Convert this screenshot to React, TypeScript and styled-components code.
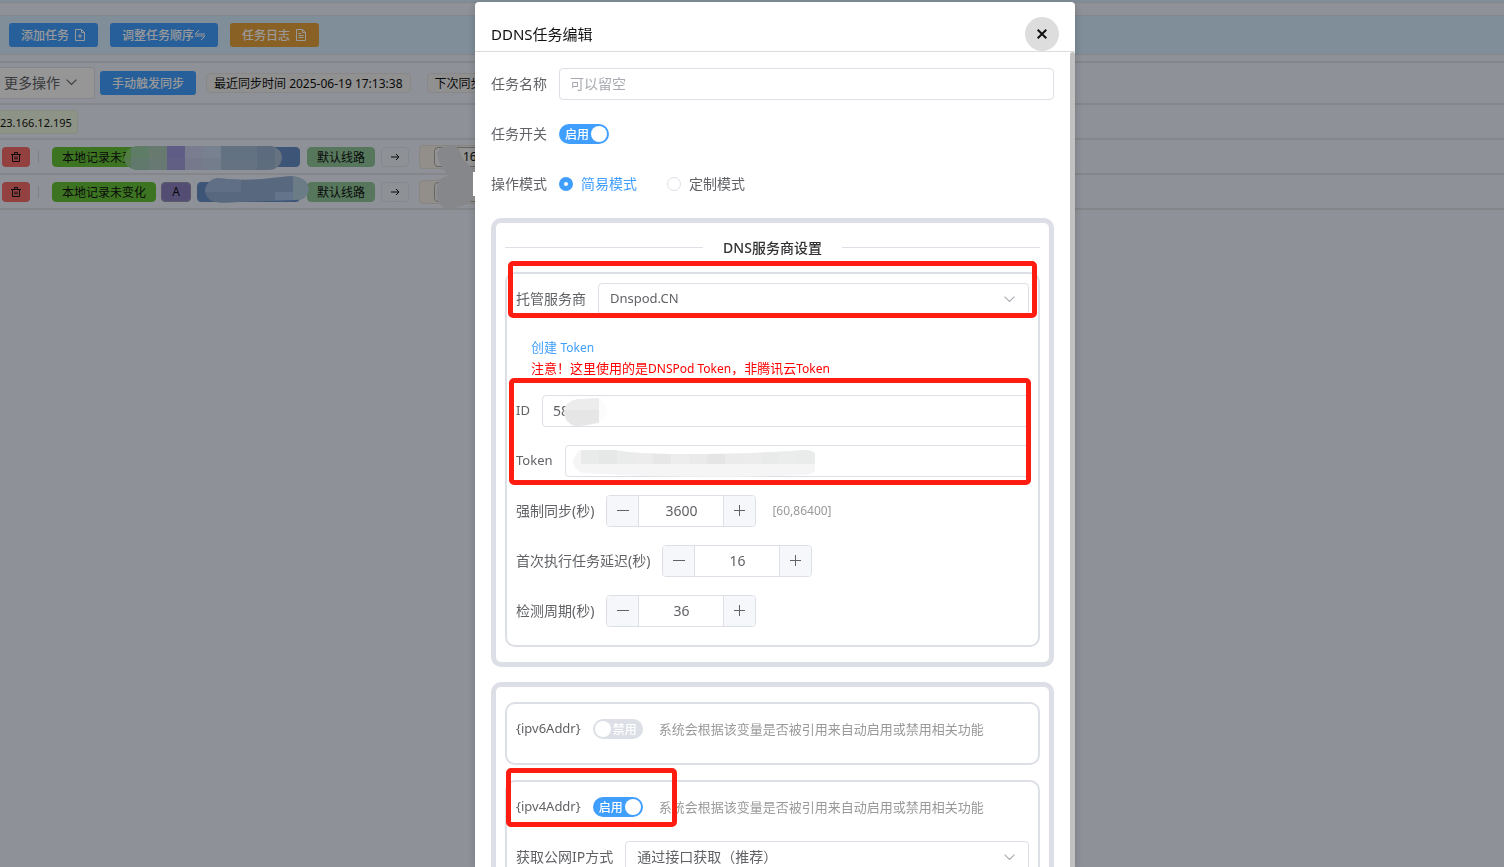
import React from "react";
import styled, { createGlobalStyle, css } from "styled-components";

const GlobalStyle = createGlobalStyle`
  *, *::before, *::after { box-sizing: border-box; }
  html, body { margin: 0; padding: 0; }
  body {
    background: #edf3fe;
    color: #111;
    font-size: 14px;
    overflow: hidden;
  }
  body, button, input, select {
    font-family: "Noto Sans", "Noto Sans CJK SC", sans-serif;
  }
  button, input, select { margin: 0; }
`;

/* ---------- page behind the dialog ---------- */

const Page = styled.main`
  min-height: 100vh;
  overflow: hidden;
  white-space: nowrap;
`;

const TopStrip = styled.div`
  height: 3px;
  background: #d5edff;
  border-bottom: 1px solid #dddfe4;
`;

const Toolbar = styled.div`
  display: flex;
  align-items: center;
  gap: 12px;
  height: 40px;
  margin: 12px 0 6px;
  padding: 0 9px;
  background: #d5edff;
  border-top: 1px solid #dddfe4;
  border-bottom: 1px solid #dddfe4;
`;

const Row = styled.div<{ $tall?: boolean }>`
  display: flex;
  align-items: center;
  height: ${(p) => (p.$tall ? 42 : 35)}px;
  border-top: 2px solid #dddfe4;
`;

const ListEnd = styled.div`
  border-top: 2px solid #dddfe4;
`;

const ActionButton = styled.button<{ $tone: "primary" | "warning"; $tight?: boolean }>`
  display: inline-flex;
  align-items: center;
  justify-content: center;
  gap: ${(p) => (p.$tight ? 0 : 5)}px;
  height: 24px;
  padding: 0 12px;
  border: 0;
  border-radius: 3px;
  color: #fff;
  font-size: 12px;
  font-weight: 500;
  background: ${(p) => (p.$tone === "primary" ? "#409eff" : "#e6a23c")};
`;

const MoreButton = styled.button`
  display: flex;
  align-items: center;
  gap: 6px;
  width: 95px;
  height: 32px;
  margin-right: 5px;
  padding: 0 0 2px 4px;
  border: 1px solid #dcdfe6;
  border-left: 0;
  border-radius: 0 4px 4px 0;
  background: #fafafa;
  color: #606266;
  font-size: 14px;
`;

const tagTones = {
  plain: css`background: #f0f0f0; border-color: #e4e3e3;`,
  lime: css`background: #edf5e2; border-color: #e1ead8;`,
  green: css`background: #67c23a; border-color: #67c23a;`,
  sage: css`background: #8fc79a; border-color: #8fc79a;`,
  purple: css`background: #8a80c0; border-color: #9a97ac;`,
  steel: css`background: #6690c8; border-color: #6690c8;`,
  frame: css`background: #edf3fb; border-color: #d9e6f2;`,
  cream: css`background: #f4efe8; border-color: #e4ded6;`,
  white: css`background: #f6f6f6; border-color: #a8a8a8;`,
};

const Tag = styled.span<{ $tone: keyof typeof tagTones; $width?: number; $gap?: number }>`
  display: inline-flex;
  align-items: center;
  justify-content: center;
  flex: none;
  height: 20px;
  width: ${(p) => (p.$width ? `${p.$width}px` : "auto")};
  margin-left: ${(p) => p.$gap ?? 0}px;
  padding: 0 7px;
  border: 1px solid;
  border-radius: 4px;
  font-size: 12px;
  ${(p) => tagTones[p.$tone]}
`;

const AddressTag = styled(Tag)`
  width: 78px;
  height: 24px;
  padding: 2px 0 0;
  border-left: 0;
  border-radius: 0 4px 4px 0;
  justify-content: flex-start;
  font-size: 11px;
`;

const TargetTag = styled(Tag)`
  height: 24px;
  padding: 0 0 0 14px;
  justify-content: flex-start;
`;

const TargetValue = styled(Tag)`
  padding: 0 0 0 28px;
  justify-content: flex-start;
`;

const DeleteButton = styled.button`
  display: grid;
  place-items: center;
  width: 28px;
  height: 20px;
  margin-left: 2px;
  padding: 0;
  border: 0;
  border-radius: 4px;
  background: #f56c6c;
`;

const Divider = styled.span`
  width: 1px;
  height: 12px;
  margin: 0 13px 0 8px;
  background: #d4d6dc;
`;

const Smudge = styled.svg`
  position: absolute;
  left: 0;
  top: 140px;
`;

/* ---------- dialog ---------- */

const Overlay = styled.div`
  position: fixed;
  inset: 0;
  display: flex;
  justify-content: center;
  padding: 2px 0 0 46px;
  background: rgba(0, 0, 0, 0.4);
`;

const Dialog = styled.section`
  display: flex;
  flex-direction: column;
  width: 600px;
  max-width: 100%;
  border-radius: 4px 4px 0 0;
  background: #fff;
  box-shadow: 0 2px 8px rgba(0, 0, 0, 0.2);
`;

const DialogHeader = styled.header`
  display: flex;
  flex: none;
  align-items: center;
  justify-content: space-between;
  height: 50px;
  padding: 14px 16px 0;
  border-bottom: 1px solid #dcdcdc;
`;

const DialogTitle = styled.h1`
  margin: 0;
  font-size: 15px;
  font-weight: 400;
  color: #111;
`;

const CloseButton = styled.button`
  display: grid;
  place-items: center;
  width: 34px;
  height: 34px;
  padding: 0;
  border: 0;
  border-radius: 50%;
  background: #ddd;
`;

const DialogMain = styled.div`
  display: flex;
  flex: 1;
  min-height: 0;
`;

const DialogBody = styled.form`
  flex: 1;
  min-width: 0;
  overflow: hidden;
  padding: 16px;
`;

const ScrollThumb = styled.div`
  width: 5px;
  border-radius: 3px 3px 0 0;
  background: #c1c1c1;
`;

const FormItem = styled.div`
  position: relative;
  display: flex;
  align-items: center;
  height: 32px;
  margin-bottom: 18px;
`;

const Label = styled.label<{ $latin?: boolean }>`
  flex: none;
  padding: 0 12px 2px 0;
  color: #606266;
  font-size: ${(p) => (p.$latin ? 13 : 14)}px;
  white-space: nowrap;
`;

const Hint = styled.span<{ $latin?: boolean }>`
  margin-left: 16px;
  padding-bottom: 2px;
  color: #999;
  font-size: ${(p) => (p.$latin ? 12 : 13)}px;
  white-space: nowrap;
`;

const fieldBox = css`
  width: 100%;
  height: 32px;
  padding: 0 10px 2px;
  border: 1px solid #dcdfe6;
  border-radius: 4px;
  outline: 0;
  background: #fff;
  color: #606266;
  font-size: 14px;
`;

const TextInput = styled.input`
  ${fieldBox}
  flex: 1;
  min-width: 0;
  width: auto;
  &::placeholder { color: #a8abb2; opacity: 1; }
`;

const SelectWrap = styled.div`
  position: relative;
  flex: 1;
  min-width: 0;
  svg {
    position: absolute;
    right: 14px;
    top: 13px;
    pointer-events: none;
  }
`;

const Select = styled.select<{ $latin?: boolean }>`
  ${fieldBox}
  padding-left: 11px;
  appearance: none;
  font-size: ${(p) => (p.$latin ? 13 : 14)}px;
`;

const SwitchLabel = styled.label<{ $on: boolean }>`
  position: relative;
  display: flex;
  flex: none;
  flex-direction: ${(p) => (p.$on ? "row" : "row-reverse")};
  align-items: center;
  justify-content: space-between;
  width: 50px;
  height: 20px;
  padding: ${(p) => (p.$on ? "0 2px 0 6px" : "0 6px 0 2px")};
  border-radius: 10px;
  background: ${(p) => (p.$on ? "#409eff" : "#dcdfe6")};
  color: #fff;
  font-size: 12px;
  font-weight: 500;
  line-height: 18px;
  span { padding-top: 2px; }
  input {
    position: absolute;
    inset: 0;
    opacity: 0;
  }
  i {
    width: 16px;
    height: 16px;
    border-radius: 50%;
    background: #fff;
  }
`;

const RadioLabel = styled.label<{ $checked?: boolean }>`
  display: flex;
  align-items: center;
  gap: 8px;
  margin-right: 30px;
  color: ${(p) => (p.$checked ? "#409eff" : "#606266")};
  font-size: 14px;
  span { padding-bottom: 2px; }
  input {
    appearance: none;
    width: 14px;
    height: 14px;
    border: ${(p) => (p.$checked ? "5px solid #409eff" : "1px solid #dcdfe6")};
    border-radius: 50%;
    background: #fff;
  }
`;

const Group = styled.section`
  margin-bottom: 15px;
  padding: 0 9px 15px;
  border: 5px solid #dcdfe6;
  border-radius: 10px;
`;

const GroupTitle = styled.h2`
  display: flex;
  align-items: center;
  gap: 20px;
  height: 49px;
  margin: 0;
  color: #303133;
  font-size: 14px;
  font-weight: 500;
  span { padding-bottom: 2px; }
  &::before, &::after {
    content: "";
    flex: 1;
    height: 1px;
    background: #dcdfe6;
  }
`;

const Panel = styled.div<{ $spaced?: boolean }>`
  position: relative;
  margin-top: ${(p) => (p.$spaced ? 15 : 0)}px;
  padding: 9px 9px 0;
  border: 2px solid #dcdfe6;
  border-radius: 10px;
`;

const Notes = styled.div`
  display: flex;
  flex-direction: column;
  align-items: flex-start;
  margin: 22px 0 16px;
  padding-left: 15px;
  font-size: 13px;
  line-height: 21px;
  white-space: nowrap;
`;

const Latin = styled.span`
  font-size: 12px;
`;

const TokenLink = styled.a`
  color: #409eff;
  text-decoration: none;
`;

const Warning = styled.span`
  color: #f00;
`;

const NumberBox = styled.div`
  display: flex;
  flex: none;
  width: 150px;
  height: 32px;
  overflow: hidden;
  border: 1px solid #dcdfe6;
  border-radius: 4px;
  input {
    flex: 1;
    min-width: 0;
    padding: 0 0 2px;
    border: 0;
    outline: 0;
    color: #606266;
    font-size: 14px;
    text-align: center;
  }
`;

const StepButton = styled.button<{ $side: "left" | "right" }>`
  display: grid;
  place-items: center;
  width: 32px;
  padding: 0;
  border: 0 solid #dcdfe6;
  border-width: ${(p) => (p.$side === "left" ? "0 1px 0 0" : "0 0 0 1px")};
  background: #f5f7fa;
`;

const Highlight = styled.div<{ $top: number; $left: number; $height: number; $right?: number; $width?: number }>`
  position: absolute;
  z-index: 2;
  top: ${(p) => p.$top}px;
  left: ${(p) => p.$left}px;
  height: ${(p) => p.$height}px;
  ${(p) => (p.$width ? `width: ${p.$width}px;` : `right: ${p.$right}px;`)}
  border: 5px solid #ff1d12;
  border-radius: 5px;
  pointer-events: none;
`;

const Mosaic = styled.svg<{ $left: number }>`
  position: absolute;
  left: ${(p) => p.$left}px;
  top: 2px;
  pointer-events: none;
`;

/* ---------- icons ---------- */

const Chevron = ({ size, color }: { size: number; color: string }) => (
  <svg width={size} height={size * 0.6} viewBox="0 0 10 6" fill="none" stroke={color}>
    <path d="M.5.5 5 5 9.5.5" />
  </svg>
);

const DocIcon = ({ add }: { add?: boolean }) => (
  <svg width="12" height="12" viewBox="0 0 12 12" fill="none" stroke="#fff">
    <path d="M1.5.5h6l3 3v8h-9zM7.5.5v3h3" />
    {add ? <path d="M6 4.8v4.4M3.8 7h4.4" /> : <path d="M3.5 4.5H6M3.5 6.5h5M3.5 8.5h5" />}
  </svg>
);

const SwapIcon = () => (
  <svg width="12" height="12" viewBox="0 0 12 12" fill="none" stroke="#fff" strokeLinejoin="round">
    <path d="M5 1 1 5h10M7 11l4-4H1" />
  </svg>
);

const TrashIcon = () => (
  <svg width="10" height="10" viewBox="0 0 10 10" fill="none" stroke="#111">
    <path d="M0 2.5h10M3.5 2V.5h3V2M1.5 2.5v7h7v-7M4 4.5v3M6 4.5v3" />
  </svg>
);

const ArrowIcon = () => (
  <svg width="9" height="8" viewBox="0 0 9 8" fill="none" stroke="#111">
    <path d="M0 4h8M5 1l3 3-3 3" />
  </svg>
);

/* ---------- form parts ---------- */

const Switch = ({ id, on, text }: { id: string; on: boolean; text: string }) => (
  <SwitchLabel $on={on}>
    <input id={id} type="checkbox" role="switch" defaultChecked={on} />
    <span>{text}</span>
    <i />
  </SwitchLabel>
);

const SelectField = ({ id, value, latin }: { id: string; value: string; latin?: boolean }) => (
  <SelectWrap>
    <Select id={id} defaultValue={value} $latin={latin}>
      <option>{value}</option>
    </Select>
    <Chevron size={11} color="#a8abb2" />
  </SelectWrap>
);

const NumberField = ({ id, label, value, hint }: { id: string; label: string; value: string; hint?: string }) => (
  <FormItem>
    <Label htmlFor={id}>{label}</Label>
    <NumberBox>
      <StepButton type="button" $side="left" aria-label="减少">
        <svg width="12" height="12" stroke="#606266"><path d="M0 5.5h12" /></svg>
      </StepButton>
      <input id={id} defaultValue={value} inputMode="numeric" />
      <StepButton type="button" $side="right" aria-label="增加">
        <svg width="12" height="12" stroke="#606266"><path d="M0 5.5h11M5.5 0v11" /></svg>
      </StepButton>
    </NumberBox>
    {hint && <Hint $latin>{hint}</Hint>}
  </FormItem>
);

const VariableItem = ({ id, name, on, text }: { id: string; name: string; on: boolean; text: string }) => (
  <FormItem>
    <Label htmlFor={id} $latin>{name}</Label>
    <Switch id={id} on={on} text={text} />
    <Hint>系统会根据该变量是否被引用来自动启用或禁用相关功能</Hint>
  </FormItem>
);

const RecordRow = ({ target }: { target: string }) => (
  <Row>
    <DeleteButton type="button" aria-label="删除"><TrashIcon /></DeleteButton>
    <Divider />
    <Tag $tone="green" $width={104}>本地记录未变化</Tag>
    <Tag $tone="purple" $width={30} $gap={5}>A</Tag>
    <Tag $tone="steel" $width={103} $gap={6} />
    <Tag $tone="sage" $width={68} $gap={7}>默认线路</Tag>
    <Tag $tone="frame" $width={28} $gap={6}><ArrowIcon /></Tag>
    <TargetTag $tone="cream" $width={140} $gap={10}>
      <TargetValue $tone="white" $width={110}>{target}</TargetValue>
    </TargetTag>
  </Row>
);

const blues = ["#5f7c67", "#687a70", "#5f5c86", "#7a7c90", "#77818f", "#637283", "#637283", "#5c6c7e", "#66727f"];
const greys = ["#e9eaea", "#e6e7e7", "#eaebeb", "#ececec", "#e7e7e7", "#ededed", "#eaeaea", "#e5e5e5", "#ebebeb", "#ececec", "#e9eaea", "#ebecec", "#e9ecea"];

const PageSmudges = () => (
  <Smudge width="475" height="72" viewBox="0 140 475 72" aria-hidden="true">
    <defs>
      <clipPath id="s1"><path d="M137 146H272Q282 149 282 158Q280 170 268 170H136Q124 167 124 158Q126 147 137 146z" /></clipPath>
      <clipPath id="s2"><path d="M217 178Q240 181 262 179L290 176Q308 177 309 190Q307 200 295 200L240 202Q218 204 212 201Q205 197 205 190Q207 180 217 178z" /></clipPath>
    </defs>
    <g clipPath="url(#s1)">
      <path d="M120 140h30v34h-30z" fill="#517c42" />
      {blues.map((c, i) => <path key={i} d={`M${131 + i * 18} 140h18v34h-18z`} fill={c} />)}
      <path d="M120 158h166v14H120z" fill="#6a7280" opacity=".22" />
    </g>
    <g clipPath="url(#s2)">
      <path d="M200 174h112v32H200z" fill="#58687e" />
      <path d="M293 174h18v32h-18z" fill="#6c7c86" />
      <path d="M203 174h38v18h-38z" fill="#66758a" opacity=".6" />
      <path d="M275 192h18v12h-18z" fill="#708097" opacity=".5" />
    </g>
    <path d="M437 153Q441 144 454 146Q459 147 462 157L473 170V200Q460 210 444 208Q434 201 437 187Q439 177 448 176Q437 162 437 153z" fill="#85878b" />
    <path d="M473 172h2v24h-2z" fill="#fff" />
  </Smudge>
);

export default function App() {
  return (
    <>
      <GlobalStyle />
      <Page>
        <TopStrip />
        <Toolbar>
          <ActionButton $tone="primary">添加任务<DocIcon add /></ActionButton>
          <ActionButton $tone="primary" $tight>调整任务顺序<SwapIcon /></ActionButton>
          <ActionButton $tone="warning">任务日志<DocIcon /></ActionButton>
        </Toolbar>
        <Row $tall>
          <MoreButton type="button">更多操作 <Chevron size={11} color="#606266" /></MoreButton>
          <ActionButton $tone="primary">手动触发同步</ActionButton>
          <Tag $tone="plain" $gap={10}>最近同步时间 2025-06-19 17:13:38</Tag>
          <Tag $tone="plain" $gap={16}>下次同步</Tag>
        </Row>
        <Row><AddressTag $tone="lime">23.166.12.195</AddressTag></Row>
        <RecordRow target="16" />
        <RecordRow target="1" />
        <ListEnd />
      </Page>

      <Overlay>
        <Dialog role="dialog" aria-labelledby="dialog-title">
          <DialogHeader>
            <DialogTitle id="dialog-title">DDNS任务编辑</DialogTitle>
            <CloseButton type="button" aria-label="关闭">
              <svg width="10" height="10" viewBox="0 0 10 10" stroke="#111" strokeWidth="2"><path d="m.7.7 8.6 8.6M9.3.7.7 9.3" /></svg>
            </CloseButton>
          </DialogHeader>
          <DialogMain>
            <DialogBody>
              <FormItem>
                <Label htmlFor="task-name">任务名称</Label>
                <TextInput id="task-name" placeholder="可以留空" />
              </FormItem>
              <FormItem>
                <Label htmlFor="task-on">任务开关</Label>
                <Switch id="task-on" on text="启用" />
              </FormItem>
              <FormItem role="radiogroup" aria-label="操作模式">
                <Label as="span">操作模式</Label>
                <RadioLabel $checked><input type="radio" name="mode" defaultChecked /><span>简易模式</span></RadioLabel>
                <RadioLabel><input type="radio" name="mode" /><span>定制模式</span></RadioLabel>
              </FormItem>

              <Group>
                <GroupTitle><span>DNS服务商设置</span></GroupTitle>
                <Panel>
                  <Highlight $top={-13} $left={1} $right={1} $height={57} />
                  <Highlight $top={104} $left={2} $right={7} $height={107} />
                  <FormItem>
                    <Label htmlFor="provider">托管服务商</Label>
                    <SelectField id="provider" value="Dnspod.CN" latin />
                  </FormItem>
                  <Notes>
                    <TokenLink href="#token">创建 <Latin>Token</Latin></TokenLink>
                    <Warning>注意！这里使用的是<Latin>DNSPod Token</Latin>，非腾讯云<Latin>Token</Latin></Warning>
                  </Notes>
                  <FormItem>
                    <Label htmlFor="token-id" $latin>ID</Label>
                    <TextInput id="token-id" defaultValue="58" />
                    <Mosaic $left={47} width="46" height="30" aria-hidden="true">
                      <path d="M4 7Q11 1 22 2L36 1V26Q22 29 12 29Q1 25 1 16Q1 10 4 7z" fill="#ececec" />
                      <path d="M2 13h34v12Q22 29 12 29Q1 25 2 13z" fill="#e6e6e7" />
                      <path d="M36 1Q44 5 44 14Q43 22 36 25z" fill="#fcfcfc" />
                    </Mosaic>
                  </FormItem>
                  <FormItem>
                    <Label htmlFor="token" $latin>Token</Label>
                    <TextInput id="token" />
                    <Mosaic $left={57} width="244" height="30" aria-hidden="true">
                      <defs>
                        <clipPath id="token-mask">
                          <path d="M8 3H42Q62 7 110 7T200 5L234 3Q242 4 242 8V24Q240 27 230 28Q150 31 70 29L10 26Q0 22 0 14Q2 6 8 3z" />
                        </clipPath>
                      </defs>
                      <g clipPath="url(#token-mask)">
                        <path d="M0 0h244v30H0z" fill="#f5f5f5" />
                        {greys.map((c, i) => <path key={i} d={`M${8 + i * 18} 0h18v17H${8 + i * 18}z`} fill={c} />)}
                      </g>
                    </Mosaic>
                  </FormItem>
                  <NumberField id="force-sync" label="强制同步(秒)" value="3600" hint="[60,86400]" />
                  <NumberField id="first-delay" label="首次执行任务延迟(秒)" value="16" />
                  <NumberField id="period" label="检测周期(秒)" value="36" />
                </Panel>
              </Group>

              <Group>
                <Panel $spaced>
                  <VariableItem id="ipv6" name="{ipv6Addr}" on={false} text="禁用" />
                </Panel>
                <Panel $spaced>
                  <Highlight $top={-14} $left={-1} $width={171} $height={59} />
                  <VariableItem id="ipv4" name="{ipv4Addr}" on text="启用" />
                  <FormItem>
                    <Label htmlFor="ip-source">获取公网IP方式</Label>
                    <SelectField id="ip-source" value="通过接口获取（推荐）" />
                  </FormItem>
                </Panel>
              </Group>
            </DialogBody>
            <ScrollThumb />
          </DialogMain>
        </Dialog>
      </Overlay>
      <PageSmudges />
    </>
  );
}
